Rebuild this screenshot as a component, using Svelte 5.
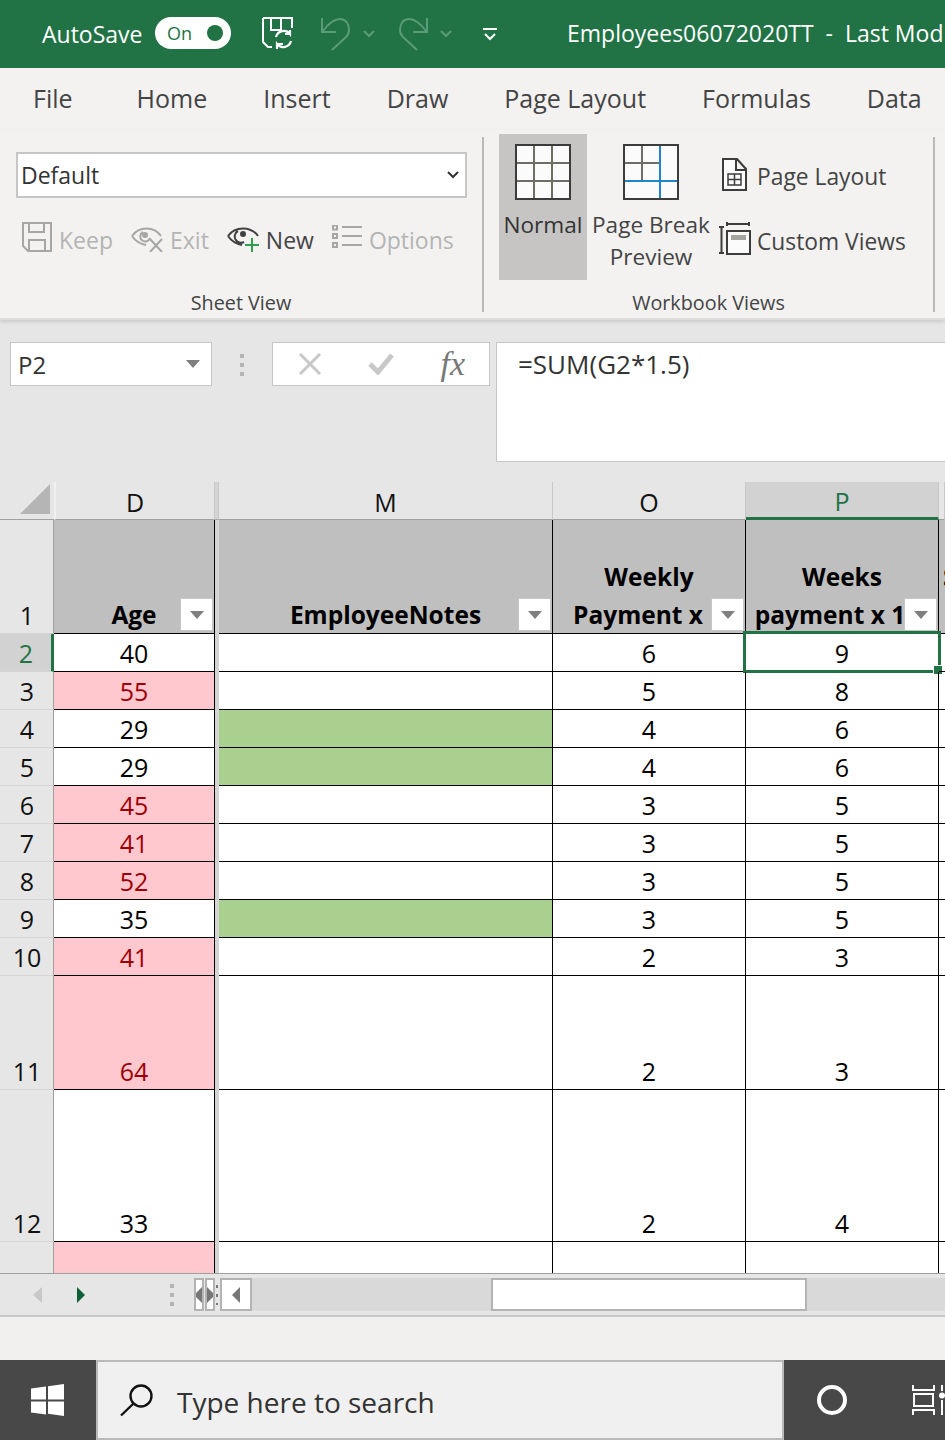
<script>
	const tabs = ['File', 'Home', 'Insert', 'Draw', 'Page Layout', 'Formulas', 'Data'];

	const rows = [
		{ n: 2, h: 38, age: 40, o: 6, p: 9, active: true },
		{ n: 3, h: 38, age: 55, o: 5, p: 8, old: true },
		{ n: 4, h: 38, age: 29, o: 4, p: 6, note: true },
		{ n: 5, h: 38, age: 29, o: 4, p: 6, note: true },
		{ n: 6, h: 38, age: 45, o: 3, p: 5, old: true },
		{ n: 7, h: 38, age: 41, o: 3, p: 5, old: true },
		{ n: 8, h: 38, age: 52, o: 3, p: 5, old: true },
		{ n: 9, h: 38, age: 35, o: 3, p: 5, note: true },
		{ n: 10, h: 38, age: 41, o: 2, p: 3, old: true },
		{ n: 11, h: 114, age: 64, o: 2, p: 3, old: true },
		{ n: 12, h: 152, age: 33, o: 2, p: 4 },
		{ n: '', h: 31, age: '', o: '', p: '', old: true, last: true }
	];

	let rowTemplate = `38px 114px ${rows.map((r) => r.h + 'px').join(' ')}`;
</script>

<div class="page">
	<header class="titlebar">
		<span class="autosave">AutoSave</span>
		<div class="toggle"><span>On</span><i></i></div>
		<svg class="qat-save" width="36" height="36" viewBox="0 0 36 36" fill="none" stroke="#fff" stroke-width="2">
			<path d="M3 2v24l5 5h4M3 2h29v10M11 2v12h10V2" />
			<path d="M16 21a8 8 0 0 1 14-3v-4M30 18h-5M31 25a8 8 0 0 1-14 3v5M17 28h6" stroke-width="2.200" />
		</svg>
		<svg class="qat-undo" width="30" height="34" viewBox="0 0 30 34" fill="none" stroke="#5b9b77" stroke-width="2">
			<path d="M1 1v14h14M2 14C8 6 14 2 19 2c6 0 9 5 9 11 0 3-1 5-3 7L11 33" />
		</svg>
		<svg class="qat-chev" width="12" height="8" viewBox="0 0 12 8" fill="none" stroke="#5b9b77" stroke-width="2"><path d="M1 1l5 5 5-5" /></svg>
		<svg class="qat-redo" width="30" height="34" viewBox="0 0 30 34" fill="none" stroke="#5b9b77" stroke-width="2">
			<path d="M29 1v14H15M28 14C22 6 16 2 11 2 5 2 2 7 2 13c0 3 1 5 3 7l14 13" />
		</svg>
		<svg class="qat-chev" width="12" height="8" viewBox="0 0 12 8" fill="none" stroke="#5b9b77" stroke-width="2"><path d="M1 1l5 5 5-5" /></svg>
		<svg class="qat-more" width="14" height="13" viewBox="0 0 14 13" fill="none" stroke="#fff" stroke-width="2"><path d="M0 1h14M2 6l5 5 5-5" /></svg>
		<span class="doc">Employees06072020TT&nbsp; - &nbsp;Last Mod</span>
	</header>

	<nav class="tabs">
		{#each tabs as tab}
			<span>{tab}</span>
		{/each}
	</nav>

	<section class="ribbon">
		<div class="group sheet">
			<div class="select"><span>Default</span>
				<svg width="12" height="8" viewBox="0 0 12 8" fill="none" stroke="#333" stroke-width="2"><path d="M1 1l5 5 5-5" /></svg>
			</div>
			<div class="tools">
				<span class="tool off">
					<svg width="30" height="30" viewBox="0 0 30 30" fill="none" stroke="#a6a6a6" stroke-width="2">
						<path d="M1 1h28v28H6l-5-5zM7 1v9h15V1M7 29V18h16v11" />
					</svg>
					Keep
				</span>
				<span class="tool off">
					<svg width="32" height="30" viewBox="0 -2 32 30" fill="none" stroke="#a6a6a6" stroke-width="2">
						<path d="M1 12c7-10 22-10 29 0M1 12c4 6 9 8 14 9M12 8a5 5 0 1 0 7 6" />
						<circle cx="14" cy="11" r="2" fill="#a6a6a6" />
						<path d="M19 15l12 13M31 15L19 28" />
					</svg>
					Exit
				</span>
				<span class="tool">
					<svg width="32" height="30" viewBox="0 -3 32 30" fill="none" stroke="#404040" stroke-width="2">
						<path d="M1 11c7-10 23-10 30 0M1 11c4 6 9 8 14 9M11 6a6 6 0 1 0 6 11" />
						<circle cx="16" cy="9" r="2" fill="#404040" />
						<path d="M25 13v14M18 20h14" stroke="#2e9e4f" />
					</svg>
					New
				</span>
				<span class="tool off">
					<svg width="30" height="24" viewBox="0 0 30 24" fill="none" stroke="#a6a6a6" stroke-width="2">
						<path d="M10 2h20M10 11h20M10 20h20" />
						<rect x="1" y="0.500" width="4" height="4" />
						<rect x="1" y="9" width="4" height="4" />
						<rect x="1" y="18" width="4" height="4" />
					</svg>
					Options
				</span>
			</div>
			<div class="label">Sheet View</div>
		</div>

		<div class="group books">
			<div class="views">
				<div class="big normal">
					<svg width="56" height="56" viewBox="0 0 56 56">
						<rect x="1" y="1" width="54" height="54" fill="#fbfbfb" stroke="#3c3c3c" stroke-width="2" />
						<path d="M19 2v52M37 2v52M2 19h52M2 37h52" stroke="#6e6e66" stroke-width="2" fill="none" />
					</svg>
					<span>Normal</span>
				</div>
				<div class="big">
					<svg width="56" height="56" viewBox="0 0 56 56" fill="none">
						<rect x="1" y="1" width="54" height="54" fill="#fbfbfb" stroke="#3c3c3c" stroke-width="2" />
						<path d="M19 2v35M2 19h35" stroke="#6e6e66" stroke-width="2" />
						<path d="M37 2v52M2 37h52" stroke="#2086cc" stroke-width="2" />
					</svg>
					<span>Page Break<br />Preview</span>
				</div>
				<div class="small-views">
					<span class="tool layout">
						<svg width="26" height="33" viewBox="0 0 26 33" fill="none" stroke="#3c3c3c" stroke-width="2">
							<path d="M2 1h14l9 10v21H2zM15 1v11h10" fill="#fbfbfb" />
							<path d="M7 16h13v11H7zM13.500 16v11M7 21.500h13" stroke-width="1.500" />
						</svg>
						Page Layout
					</span>
					<span class="tool custom">
						<svg width="33" height="33" viewBox="0 0 33 33" fill="none" stroke="#3c3c3c" stroke-width="2">
							<path d="M9 2h22M9 0v4M31 0v4M1 5h5M3.500 5v26M1 31h5" />
							<rect x="9" y="9" width="23" height="23" fill="#fbfbfb" />
							<rect x="13" y="13" width="15" height="5" fill="#a5a5a0" stroke="none" />
						</svg>
						Custom Views
					</span>
				</div>
			</div>
			<div class="label">Workbook Views</div>
		</div>
	</section>

	<section class="formula">
		<div class="namebox"><span>P2</span><i class="caret"></i></div>
		<div class="dots"><i></i><i></i><i></i></div>
		<div class="actions">
			<svg width="24" height="22" viewBox="0 0 24 22" fill="none" stroke="#c8c8c8" stroke-width="3"><path d="M2 1l20 20M22 1L2 21" /></svg>
			<svg width="26" height="22" viewBox="0 0 26 22" fill="none" stroke="#c8c8c8" stroke-width="5"><path d="M2 11l8 8L24 2" /></svg>
			<span class="fx">fx</span>
		</div>
		<div class="input">=SUM(G2*1.5)</div>
	</section>

	<section class="sheet-grid" style:grid-template-rows={rowTemplate}>
		<div class="colhead corner"><svg width="32" height="32" viewBox="0 0 32 32"><path d="M31 1v30H1z" fill="#b5b5b5" /></svg></div>
		<div class="colhead first">D</div>
		<div class="colhead gap"></div>
		<div class="colhead">M</div>
		<div class="colhead">O</div>
		<div class="colhead picked">P</div>
		<div class="colhead"></div>

		<div class="rowhead">1</div>
		<div class="cell title"><div class="text">Age</div><span class="filter"><i class="caret"></i></span></div>
		<div class="gap"></div>
		<div class="cell title"><div class="text">EmployeeNotes</div><span class="filter"><i class="caret"></i></span></div>
		<div class="cell title"><div class="text">Weekly<br /><span class="line pay">Payment x</span></div><span class="filter"><i class="caret"></i></span></div>
		<div class="cell title"><div class="text">Weeks<br /><span class="line wk">payment x 1</span></div><span class="filter"><i class="caret"></i></span></div>
		<div class="cell title next"><div class="text">S</div></div>

		{#each rows as row}
			<div class="rowhead" class:picked={row.active} class:last={row.last}>{row.n}</div>
			<div class="cell" class:old={row.old} class:last={row.last}>{row.age}</div>
			<div class="gap"></div>
			<div class="cell" class:note={row.note} class:last={row.last}></div>
			<div class="cell" class:last={row.last}>{row.o}</div>
			<div class="cell" class:last={row.last}>
				{row.p}
				{#if row.active}
					<span class="selection"><i></i></span>
				{/if}
			</div>
			<div class="cell next" class:last={row.last}></div>
		{/each}
	</section>

	<section class="scrollbar">
		<svg class="tab-prev" width="10" height="16" viewBox="0 0 10 16"><path d="M9 0v16L0 8z" fill="#c8c8c8" /></svg>
		<svg class="tab-next" width="10" height="16" viewBox="0 0 10 16"><path d="M1 0v16l8-8z" fill="#0e6034" /></svg>
		<div class="dots"><i></i><i></i><i></i></div>
		<div class="splitter">
			<span class="end"><b class="left"></b></span><span><b class="right"></b></span>
		</div>
		<i class="grip"></i>
		<div class="track">
			<span class="back"><b class="left"></b></span>
			<span class="thumb"></span>
		</div>
	</section>

	<div class="status"></div>

	<footer class="taskbar">
		<div class="start">
			<svg width="34" height="32" viewBox="0 0 34 32"><path d="M0 4.500l15-2v13H0zM17 2.200L33 0v15.500H17zM0 17.500h15v13l-15-2zM17 17.500h16V32l-16-2.200z" fill="#fff" /></svg>
		</div>
		<div class="search">
			<svg width="34" height="34" viewBox="0 0 34 34" fill="none" stroke="#111" stroke-width="2.400">
				<circle cx="21" cy="13" r="10.500" /><path d="M13.500 20.500L1 32.500" />
			</svg>
			<span>Type here to search</span>
		</div>
		<div class="tray">
			<i class="cortana"></i>
			<svg width="33" height="30" viewBox="0 0 33 30" fill="none" stroke="#fff" stroke-width="2">
				<path d="M1 0v5h21V0M2 9h19v12H2zM1 30v-5h21v5" />
				<path d="M30 0v6M30 15v15" />
				<circle cx="30" cy="10.500" r="3" fill="#fff" stroke="none" />
			</svg>
		</div>
	</footer>
</div>

<style>
	:global(body) {
		margin: 0;
	}

	.page {
		display: flex;
		flex-direction: column;
		width: 945px;
		height: 1440px;
		overflow: hidden;
		background: #f3f2f1;
		color: #444;
		font-family: 'Open Sans', 'Noto Sans', sans-serif;
		font-size: 24px;
	}

	svg {
		display: block;
		flex: none;
	}

	.titlebar {
		display: flex;
		flex: none;
		align-items: center;
		height: 68px;
		padding-left: 42px;
		background: #217346;
		color: #fff;
		white-space: nowrap;
	}

	.autosave {
		flex: none;
		width: 113px;
		font-size: 23px;
	}

	.toggle {
		display: flex;
		flex: none;
		align-items: center;
		justify-content: space-between;
		width: 76px;
		height: 32px;
		box-sizing: border-box;
		margin-bottom: 2px;
		padding: 0 8px 0 12px;
		border-radius: 16px;
		background: #fff;
		color: #217346;
		font-size: 18px;
	}

	.toggle i {
		width: 16px;
		height: 16px;
		border-radius: 50%;
		background: #217346;
	}

	.qat-save {
		margin-left: 29px;
	}

	.qat-undo {
		margin-left: 25px;
	}

	.qat-redo {
		margin-left: 23px;
	}

	.qat-chev {
		margin-left: 12px;
	}

	.qat-more {
		margin-left: 31px;
	}

	.doc {
		flex: none;
		margin: 0 0 2px 70px;
		font-size: 23px;
	}

	.tabs {
		display: flex;
		flex: none;
		gap: 56px;
		align-items: center;
		height: 62px;
		box-sizing: border-box;
		padding: 0 0 2px 33px;
		font-size: 25px;
		white-space: nowrap;
	}

	.tabs span:first-child {
		margin-right: 8px;
	}

	.ribbon {
		display: flex;
		flex: none;
		height: 190px;
		box-sizing: border-box;
		border-bottom: 2px solid #dcdcdc;
		box-shadow: 0 2px 4px rgb(0 0 0 / 0.12);
		position: relative;
		z-index: 1;
	}

	.group {
		display: flex;
		flex-direction: column;
		position: relative;
	}

	.sheet {
		width: 484px;
		height: 175px;
		box-sizing: border-box;
		margin-top: 7px;
		padding: 15px 15px 0 16px;
		border-right: 2px solid #b9b9b9;
	}

	.books {
		width: 451px;
		height: 175px;
		margin-top: 7px;
		border-right: 2px solid #b9b9b9;
		box-sizing: border-box;
	}

	.select {
		display: flex;
		align-items: center;
		justify-content: space-between;
		height: 46px;
		box-sizing: border-box;
		padding: 0 6px 0 3px;
		border: 2px solid #c6c6c6;
		background: #fff;
		color: #333;
		font-size: 23px;
	}

	.tools {
		display: flex;
		align-items: center;
		height: 50px;
		margin-top: 17px;
		padding-left: 6px;
		gap: 18px;
		font-size: 23px;
	}

	.tools svg {
		margin-bottom: 6px;
	}

	.tool {
		display: flex;
		align-items: center;
		gap: 7px;
		white-space: nowrap;
	}

	.tool.off {
		color: #b4b4b4;
	}

	.label {
		position: absolute;
		left: 0;
		right: 0;
		bottom: -5px;
		text-align: center;
		font-size: 19.800px;
		line-height: 28px;
	}

	.views {
		display: flex;
		height: 146px;
		margin-top: -3px;
		padding-left: 15px;
	}

	.big {
		display: flex;
		flex-direction: column;
		align-items: center;
		width: 88px;
		padding-top: 10px;
		box-sizing: border-box;
		font-size: 22.600px;
		line-height: 32px;
		text-align: center;
		white-space: nowrap;
	}

	.big span {
		margin-top: 9px;
	}

	.normal {
		background: #c6c5c3;
		color: #333;
	}

	.big:not(.normal) {
		width: 128px;
	}

	.small-views {
		display: flex;
		flex-direction: column;
		gap: 27px;
		padding: 24px 0 0 3px;
		font-size: 22.800px;
	}

	.layout {
		padding-left: 3px;
		gap: 10px;
	}

	.layout svg {
		margin-bottom: 4px;
	}

	.custom {
		gap: 6px;
	}

	.custom svg {
		margin-bottom: 6px;
	}

	.formula {
		display: flex;
		flex: none;
		align-items: flex-start;
		height: 162px;
		box-sizing: border-box;
		padding: 22px 0 0 10px;
		background: #e6e6e6;
	}

	.namebox {
		display: flex;
		align-items: center;
		justify-content: space-between;
		width: 202px;
		height: 44px;
		box-sizing: border-box;
		padding: 0 11px 0 7px;
		border: 1px solid #c6c6c6;
		background: #fff;
		color: #333;
		font-size: 24px;
	}

	.caret {
		display: block;
		width: 0;
		height: 0;
		border: 7px solid transparent;
		border-top: 8px solid #7f7f7f;
		border-bottom: 0;
	}

	.dots {
		display: flex;
		flex-direction: column;
		gap: 5px;
	}

	.dots i {
		width: 4px;
		height: 4px;
		background: #b4b4b4;
	}

	.formula .dots {
		width: 60px;
		align-items: center;
		padding-top: 12px;
	}

	.actions {
		display: flex;
		align-items: center;
		justify-content: space-between;
		width: 218px;
		height: 44px;
		box-sizing: border-box;
		padding: 0 24px 0 25px;
		border: 1px solid #c6c6c6;
		background: #fff;
	}

	.fx {
		color: #777;
		font-family: 'Liberation Serif', serif;
		font-size: 34px;
		font-style: italic;
	}

	.input {
		flex: 1;
		height: 120px;
		box-sizing: border-box;
		margin-left: 6px;
		padding: 3px 0 0 21px;
		border: 1px solid #c6c6c6;
		border-right: 0;
		background: #fff;
		color: #333;
		font-size: 26px;
	}

	.sheet-grid {
		display: grid;
		flex: none;
		grid-template-columns: 54px 161px 4px 334px 193px 193px 6px;
		height: 791px;
		background: #fff;
		color: #000;
		font-size: 25px;
	}

	.colhead {
		display: flex;
		align-items: center;
		justify-content: center;
		box-sizing: border-box;
		padding-top: 3px;
		background: #e6e6e6;
		border-bottom: 1px solid #a0a0a0;
		border-right: 1px solid #c8c8c8;
		color: #111;
		font-size: 25px;
	}

	.colhead.corner {
		justify-content: flex-end;
		padding: 0 3px 3px 0;
		border-right: 0;
	}

	.colhead.first {
		border-left: 2px solid #f1f1f1;
	}

	.colhead.picked {
		background: #d2d2d2;
		border-bottom: 3px solid #217346;
		color: #217346;
		padding-top: 2px;
	}

	.gap {
		background: #d4d4d4;
	}

	.rowhead {
		display: flex;
		align-items: flex-end;
		justify-content: center;
		box-sizing: border-box;
		padding-left: 1px;
		background: #e6e6e6;
		border-right: 1px solid #a0a0a0;
		border-bottom: 1px solid #d4d4d4;
		line-height: 36px;
		color: #111;
	}

	.rowhead.picked {
		background: #d2d2d2;
		border-right: 3px solid #217346;
		color: #217346;
	}

	.rowhead.last {
		border-bottom: 0;
	}

	.cell {
		position: relative;
		display: flex;
		align-items: flex-end;
		justify-content: center;
		box-sizing: border-box;
		border-right: 1px solid #000;
		border-bottom: 1px solid #000;
		line-height: 36px;
		white-space: nowrap;
	}

	.cell.last {
		border-bottom: 0;
	}

	.cell.old {
		background: #ffc7ce;
		color: #9c0006;
	}

	.cell.note {
		background: #a9d08e;
	}

	.cell.next {
		border-right: 0;
		overflow: hidden;
	}

	.title {
		background: #bfbfbf;
		font-size: 24.500px;
		font-weight: 700;
		line-height: 38px;
		text-align: center;
	}

	.title .text {
		position: relative;
		top: 1px;
	}

	.line {
		display: inline-block;
	}

	.pay {
		padding-right: 22px;
	}

	.wk {
		padding-right: 24px;
	}

	.title.next {
		justify-content: flex-start;
		padding: 0 0 38px 4px;
	}

	.filter {
		position: absolute;
		right: 1px;
		bottom: 2px;
		display: flex;
		align-items: center;
		justify-content: center;
		width: 33px;
		height: 33px;
		box-sizing: border-box;
		border: 1px solid #c6c6c6;
		background: #fff;
	}

	.selection {
		position: absolute;
		inset: -3px -3px -2px -3px;
		border: 3px solid #217346;
	}

	.selection i {
		position: absolute;
		right: -4px;
		bottom: -4px;
		width: 8px;
		height: 8px;
		background: #217346;
		outline: 1px solid #fff;
	}

	.scrollbar {
		display: flex;
		flex: none;
		align-items: center;
		height: 44px;
		box-sizing: border-box;
		border-top: 1px solid #a0a0a0;
		border-bottom: 2px solid #c8c8c8;
		background: #e6e6e6;
	}

	.tab-prev {
		margin-left: 33px;
	}

	.tab-next {
		margin-left: 33px;
	}

	.scrollbar .dots {
		margin-left: 84px;
	}

	.splitter {
		display: flex;
		gap: 1px;
		margin-left: 20px;
		height: 33px;
	}

	.splitter span {
		display: flex;
		align-items: center;
		width: 10px;
		box-sizing: border-box;
		border: 2px solid #b3b3b3;
		background: #fff;
		overflow: hidden;
	}

	.splitter .end {
		justify-content: flex-end;
	}

	.left {
		display: block;
		flex: none;
		border: 8px solid transparent;
		border-right: 8px solid #777;
		border-left: 0;
	}

	.right {
		display: block;
		flex: none;
		border: 8px solid transparent;
		border-left: 8px solid #777;
		border-right: 0;
	}

	.grip {
		width: 2px;
		height: 20px;
		margin: 0 2px 0 1px;
		background: repeating-linear-gradient(#777 0 3px, transparent 3px 9px);
	}

	.track {
		display: flex;
		flex: 1;
		height: 33px;
		background: #d9d9d9;
	}

	.back {
		display: flex;
		align-items: center;
		justify-content: center;
		width: 32px;
		box-sizing: border-box;
		border: 2px solid #b3b3b3;
		background: #fff;
	}

	.thumb {
		width: 316px;
		box-sizing: border-box;
		margin-left: 239px;
		border: 2px solid #b3b3b3;
		background: #fff;
	}

	.status {
		flex: none;
		height: 43px;
		background: #f1f0ef;
	}

	.taskbar {
		display: flex;
		flex: 1;
		background: #484848;
	}

	.start {
		display: flex;
		align-items: center;
		justify-content: center;
		width: 96px;
	}

	.search {
		display: flex;
		align-items: center;
		gap: 23px;
		width: 688px;
		box-sizing: border-box;
		padding: 0 0 0 22px;
		border: 2px solid #b9b9b9;
		background: #f0f0f0;
		color: #333;
		font-size: 28px;
	}

	.search span {
		margin-top: 4px;
	}

	.tray {
		display: flex;
		flex: 1;
		align-items: center;
		padding-left: 33px;
		gap: 65px;
	}

	.cortana {
		flex: none;
		width: 22px;
		height: 22px;
		border: 4px solid #fff;
		border-radius: 50%;
	}
</style>
